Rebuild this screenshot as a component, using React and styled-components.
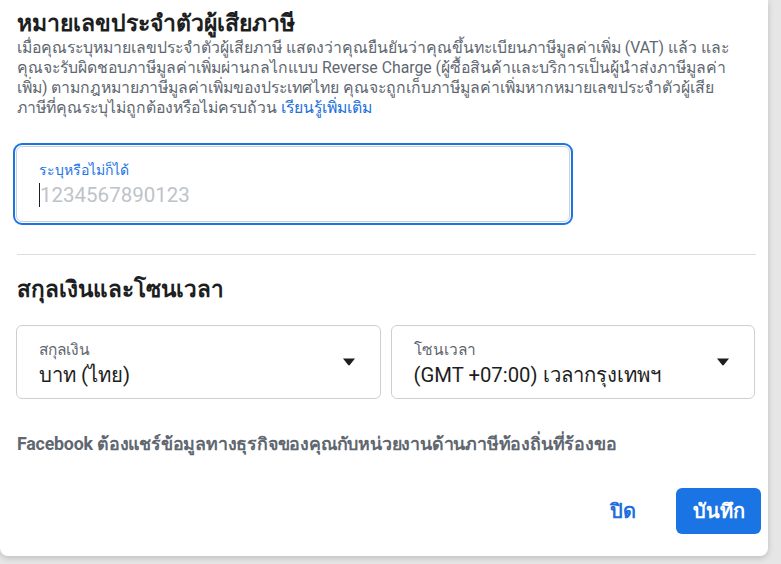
import React from "react";
import styled, { createGlobalStyle } from "styled-components";

const GlobalStyle = createGlobalStyle`
  html, body {
    margin: 0;
    padding: 0;
    background: #e6e6e6;
  }
  body {
    font-family: Roboto, "Noto Sans", "Liberation Sans", sans-serif;
  }
`;

const Page = styled.div`
  width: 781px;
  height: 564px;
  overflow: hidden;
`;

const Dialog = styled.div`
  width: 768px;
  height: 556px;
  background: #fff;
  border-radius: 0 0 8px 8px;
  box-shadow: 0 2px 6px rgba(0, 0, 0, 0.18);
  box-sizing: border-box;
  padding: 10px 12px 0 17px;
  display: flex;
  flex-direction: column;

  & > * {
    flex-shrink: 0;
  }
`;

const Title = styled.h2`
  margin: 0;
  font-size: ${(p) => p.size || "23px"};
  line-height: 28px;
  font-weight: 700;
  color: #1c1e21;
`;

const Paragraph = styled.p`
  margin: 0;
  font-size: 15.8px;
  line-height: 20px;
  color: #606770;
  white-space: nowrap;
`;

const Link = styled.a`
  color: #216fdb;
  text-decoration: none;
`;

const InputOuter = styled.div`
  margin: 25px 0 0 -4px;
  width: 560px;
  height: 82px;
  box-sizing: border-box;
  border: 2px solid #1b74e4;
  border-radius: 9px;
  padding: 1px;
`;

const InputInner = styled.div`
  height: 100%;
  box-sizing: border-box;
  border: 1px solid #ccd0d5;
  border-radius: 6px;
  padding: 14px 22px 0;
  display: flex;
  flex-direction: column;
`;

const FloatLabel = styled.span`
  font-size: ${(p) => (p.active ? "14px" : "15.5px")};
  line-height: ${(p) => (p.active ? "18px" : "20px")};
  color: ${(p) => (p.active ? "#1b74e4" : "#606770")};
`;

const Placeholder = styled.div`
  font-size: 20.5px;
  line-height: 32px;
  color: #bec3c9;
  display: flex;
  align-items: center;
`;

const Caret = styled.span`
  display: inline-block;
  width: 1px;
  height: 24px;
  background: #1c1e21;
`;

const Divider = styled.hr`
  border: none;
  border-top: 1px solid #dadde1;
  margin: 29px 0 0;
  width: 739px;
`;

const SectionTitle = styled(Title)`
  margin-top: 19px;
  line-height: 30px;
`;

const SelectRow = styled.div`
  display: flex;
  gap: 10px;
  margin: 21px 0 0 -1px;
  width: 739px;
`;

const Select = styled.div`
  flex: 1;
  height: 74px;
  box-sizing: border-box;
  border: 1px solid #ccd0d5;
  border-radius: 6px;
  padding: 0 25px 0 22px;
  display: flex;
  align-items: center;
`;

const SelectText = styled.div`
  flex: 1;
  display: flex;
  flex-direction: column;
  padding-top: 6px;
`;

const SelectValue = styled.span`
  font-size: 20.3px;
  line-height: 30px;
  color: #1c1e21;
`;

const Note = styled.p`
  margin: 35px 0 0;
  font-size: 17.8px;
  line-height: 20px;
  font-weight: 700;
  color: #606770;
  white-space: nowrap;
  letter-spacing: -0.2px;
`;

const Footer = styled.div`
  display: flex;
  justify-content: flex-end;
  align-items: center;
  gap: 40px;
  margin: 34px -5px 0 0;
`;

const TextButton = styled.button`
  border: none;
  background: none;
  padding: 0;
  font-family: inherit;
  font-size: 20px;
  font-weight: 700;
  color: #216fdb;
  cursor: pointer;
`;

const PrimaryButton = styled.button`
  border: none;
  background: #1b74e4;
  border-radius: 6px;
  width: 85px;
  height: 46px;
  padding: 0;
  font-family: inherit;
  font-size: 20px;
  font-weight: 700;
  color: #fff;
  cursor: pointer;
`;

const Triangle = () => (
  <svg width="12" height="8" viewBox="0 0 12 8">
    <path d="M0 0.5 H12 L6.8 7 Q6 7.8 5.2 7 Z" fill="#1c1e21" />
  </svg>
);

const SelectBox = ({ label, value }) => (
  <Select>
    <SelectText>
      <FloatLabel>{label}</FloatLabel>
      <SelectValue>{value}</SelectValue>
    </SelectText>
    <Triangle />
  </Select>
);

export default function App() {
  return (
    <Page>
      <GlobalStyle />
      <Dialog>
        <Title>หมายเลขประจำตัวผู้เสียภาษี</Title>
        <Paragraph>
          เมื่อคุณระบุหมายเลขประจำตัวผู้เสียภาษี แสดงว่าคุณยืนยันว่าคุณขึ้นทะเบียนภาษีมูลค่าเพิ่ม (VAT) แล้ว และ
          <br />
          คุณจะรับผิดชอบภาษีมูลค่าเพิ่มผ่านกลไกแบบ Reverse Charge (ผู้ซื้อสินค้าและบริการเป็นผู้นำส่งภาษีมูลค่า
          <br />
          เพิ่ม) ตามกฎหมายภาษีมูลค่าเพิ่มของประเทศไทย คุณจะถูกเก็บภาษีมูลค่าเพิ่มหากหมายเลขประจำตัวผู้เสีย
          <br />
          ภาษีที่คุณระบุไม่ถูกต้องหรือไม่ครบถ้วน <Link href="#">เรียนรู้เพิ่มเติม</Link>
        </Paragraph>

        <InputOuter>
          <InputInner>
            <FloatLabel active>ระบุหรือไม่ก็ได้</FloatLabel>
            <Placeholder>
              <Caret />
              1234567890123
            </Placeholder>
          </InputInner>
        </InputOuter>

        <Divider />

        <SectionTitle size="22.5px">สกุลเงินและโซนเวลา</SectionTitle>
        <SelectRow>
          <SelectBox label="สกุลเงิน" value="บาท (ไทย)" />
          <SelectBox label="โซนเวลา" value="(GMT +07:00) เวลากรุงเทพฯ" />
        </SelectRow>

        <Note>Facebook ต้องแชร์ข้อมูลทางธุรกิจของคุณกับหน่วยงานด้านภาษีท้องถิ่นที่ร้องขอ</Note>

        <Footer>
          <TextButton>ปิด</TextButton>
          <PrimaryButton>บันทึก</PrimaryButton>
        </Footer>
      </Dialog>
    </Page>
  );
}
